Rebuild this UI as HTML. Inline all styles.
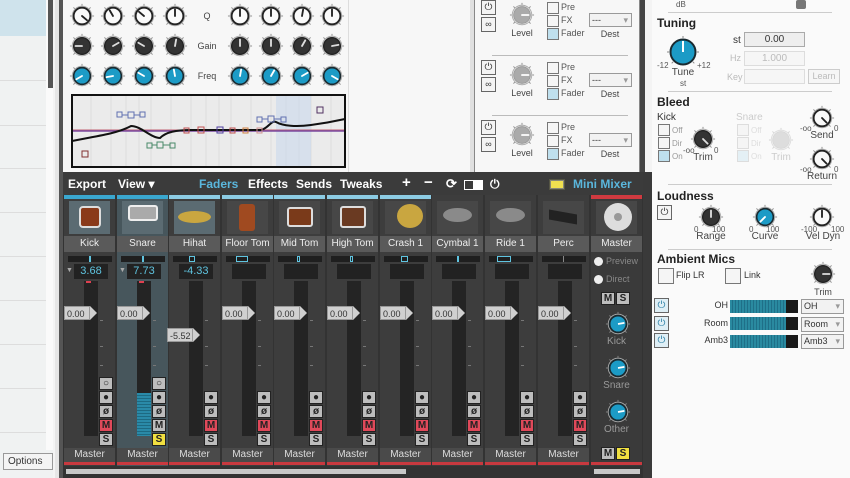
<!DOCTYPE html>
<html><head><meta charset="utf-8"><style>
*{margin:0;padding:0;box-sizing:border-box}
body{width:850px;height:478px;overflow:hidden;position:relative;background:#f4f4f4;font-family:"Liberation Sans",sans-serif;font-size:10px;color:#333}
.a{position:absolute}
.k{position:absolute;width:26px;height:26px}
.k .p{stroke-width:2;stroke-linecap:round}
.lbl{position:absolute;text-align:center;font-size:9px;color:#444}
.strip{position:absolute;top:195px;width:51px;height:271px;background:#3d3d3d}
.strip>*{position:absolute}
.bar{left:0;top:0;width:51px;height:4px}
.img{left:5px;top:6px;width:41px;height:33px;background:#474747}
.nm{left:0;top:41px;width:51px;height:16px;background:#5a5a5a;color:#eee;text-align:center;line-height:16px;font-size:10px}
.pan{left:4px;top:61px;width:44px;height:6px;background:#1f1f1f}
.pan i{position:absolute;top:0;height:6px;border:1px solid #5fc4e0}
.val{left:10px;top:69px;width:34px;height:15px;background:#222;color:#5fc4e0;text-align:center;font-size:11px;line-height:15px}
.trk{left:20px;top:86px;width:14px;height:155px;background:#242424}
.tk{left:36px;width:3px;height:1px;background:#777}
.hd{left:0;top:111px;width:26px;height:14px;background:#d0d0d0;color:#333;font-size:9px;line-height:14px;padding-left:2px;border:1px solid #999}
.hd:after{content:"";position:absolute;right:-8px;top:-1px;border-left:7px solid #d0d0d0;border-top:7px solid transparent;border-bottom:7px solid transparent}
.b{left:35px;width:14px;height:13px;background:#bdbdbd;border:1px solid #222;color:#222;font-size:10px;font-weight:bold;text-align:center;line-height:11px}
.m{background:#e0495a;color:#222}
.ms{left:0;top:253px;width:51px;height:14px;background:#4a4a4a;color:#ddd;text-align:center;font-size:10px;line-height:14px}
.rb{left:0;top:267px;width:51px;height:3px;background:#c8393f}
.tb{position:absolute;top:177px;color:#fff;font-weight:bold;font-size:12px}
.sec{position:absolute;left:657px;font-weight:bold;font-size:12px;color:#222}
.sep{position:absolute;left:668px;width:164px;height:1px;background:#ccc}
.cb{position:absolute;width:12px;height:12px;border:1px solid #777;background:#f5f5f5}
.cbc{background:#bfe0ee}
.pw{position:absolute;width:15px;height:15px;border:1px solid #666;background:#f4f4f4;font-size:10px;text-align:center;line-height:13px}
.inp{position:absolute;border:1px solid #aaa;background:#eee;text-align:center;font-size:10px;line-height:13px}
.dd{position:absolute;width:43px;height:14px;border:1px solid #999;background:#f2f2f2;font-size:9px;padding-left:2px;line-height:12px}
.dd:after{content:"▾";position:absolute;right:3px;color:#999}
.sm{position:absolute;font-size:8px;color:#555}
</style></head><body>
<svg width="0" height="0" style="position:absolute">
<defs>
<g id="tk"><g stroke="#888" stroke-width="1"><path d="M0-13V-11" transform="rotate(-135)"/><path d="M0-13V-11" transform="rotate(-90)"/><path d="M0-13V-11" transform="rotate(-45)"/><path d="M0-13V-11"/><path d="M0-13V-11" transform="rotate(45)"/><path d="M0-13V-11" transform="rotate(90)"/><path d="M0-13V-11" transform="rotate(135)"/></g><circle r="10.5" fill="none" stroke="#aaa" stroke-width="1"/></g>
<g id="kw"><use href="#tk"/><circle r="9" fill="#fafafa" stroke="#222" stroke-width="2"/></g>
<g id="kd"><use href="#tk"/><circle r="9" fill="#333" stroke="#222" stroke-width="1.5"/></g>
<g id="kb"><use href="#tk"/><circle r="9" fill="#1c9bc6" stroke="#1a2a30" stroke-width="1.8"/></g>
<g id="kg"><use href="#tk"/><circle r="9" fill="#aaa" stroke="#999" stroke-width="1"/></g>
</defs></svg>

<!-- left panel -->
<div class="a" style="left:0;top:0;width:53px;height:478px;background:#f0f2f2"></div>
<div class="a" style="left:0;top:0;width:46px;height:36px;background:#cfe3ec"></div>
<div class="a" style="left:0;top:80px;width:46px;height:1px;background:#ddd"></div>
<div class="a" style="left:0;top:125px;width:46px;height:1px;background:#ddd"></div>
<div class="a" style="left:0;top:168px;width:46px;height:1px;background:#ddd"></div>
<div class="a" style="left:0;top:212px;width:46px;height:1px;background:#ddd"></div>
<div class="a" style="left:0;top:256px;width:46px;height:1px;background:#ddd"></div>
<div class="a" style="left:0;top:300px;width:46px;height:1px;background:#ddd"></div>
<div class="a" style="left:0;top:344px;width:46px;height:1px;background:#ddd"></div>
<div class="a" style="left:0;top:388px;width:46px;height:1px;background:#ddd"></div>
<div class="a" style="left:0;top:432px;width:46px;height:1px;background:#ddd"></div>
<div class="a" style="left:46px;top:0;width:7px;height:450px;background:#fafafa"></div>
<div class="a" style="left:48px;top:0;width:5px;height:88px;background:#555"></div>
<div class="a" style="left:3px;top:453px;width:50px;height:17px;border:1px solid #999;background:#f4f4f4;font-size:10px;line-height:15px;padding-left:4px">Options</div>
<div class="a" style="left:55px;top:0;width:8px;height:478px;background:#e6e6e6"></div>
<div class="a" style="left:59px;top:0;width:4px;height:478px;background:#555"></div>

<!-- EQ panel -->
<div class="a" style="left:63px;top:0;width:407px;height:172px;background:#f7f7f7"></div>
<div class="a" style="left:348px;top:0;width:1px;height:172px;background:#ddd"></div>
<svg class="k" style="left:69px;top:3px"viewBox="-14 -14 28 28"><use href="#kw"/><path class="p" d="M0 0V-7" stroke="#222" transform="rotate(130)"/></svg>
<svg class="k" style="left:100px;top:3px"viewBox="-14 -14 28 28"><use href="#kw"/><path class="p" d="M0 0V-7" stroke="#222" transform="rotate(-30)"/></svg>
<svg class="k" style="left:131px;top:3px"viewBox="-14 -14 28 28"><use href="#kw"/><path class="p" d="M0 0V-7" stroke="#222" transform="rotate(-50)"/></svg>
<svg class="k" style="left:162px;top:3px"viewBox="-14 -14 28 28"><use href="#kw"/><path class="p" d="M0 0V-7" stroke="#222"/></svg>
<svg class="k" style="left:227px;top:3px"viewBox="-14 -14 28 28"><use href="#kw"/><path class="p" d="M0 0V-7" stroke="#222"/></svg>
<svg class="k" style="left:258px;top:3px"viewBox="-14 -14 28 28"><use href="#kw"/><path class="p" d="M0 0V-7" stroke="#222"/></svg>
<svg class="k" style="left:289px;top:3px"viewBox="-14 -14 28 28"><use href="#kw"/><path class="p" d="M0 0V-7" stroke="#222" transform="rotate(10)"/></svg>
<svg class="k" style="left:319px;top:3px"viewBox="-14 -14 28 28"><use href="#kw"/><path class="p" d="M0 0V-7" stroke="#222"/></svg>
<svg class="k" style="left:69px;top:33px"viewBox="-14 -14 28 28"><use href="#kd"/><path class="p" d="M0 0V-7" stroke="#ddd" transform="rotate(-90)"/></svg>
<svg class="k" style="left:100px;top:33px"viewBox="-14 -14 28 28"><use href="#kd"/><path class="p" d="M0 0V-7" stroke="#ddd" transform="rotate(60)"/></svg>
<svg class="k" style="left:131px;top:33px"viewBox="-14 -14 28 28"><use href="#kd"/><path class="p" d="M0 0V-7" stroke="#ddd" transform="rotate(-60)"/></svg>
<svg class="k" style="left:162px;top:33px"viewBox="-14 -14 28 28"><use href="#kd"/><path class="p" d="M0 0V-7" stroke="#ddd" transform="rotate(10)"/></svg>
<svg class="k" style="left:227px;top:33px"viewBox="-14 -14 28 28"><use href="#kd"/><path class="p" d="M0 0V-7" stroke="#ddd"/></svg>
<svg class="k" style="left:258px;top:33px"viewBox="-14 -14 28 28"><use href="#kd"/><path class="p" d="M0 0V-7" stroke="#ddd"/></svg>
<svg class="k" style="left:289px;top:33px"viewBox="-14 -14 28 28"><use href="#kd"/><path class="p" d="M0 0V-7" stroke="#ddd" transform="rotate(30)"/></svg>
<svg class="k" style="left:319px;top:33px"viewBox="-14 -14 28 28"><use href="#kd"/><path class="p" d="M0 0V-7" stroke="#ddd" transform="rotate(80)"/></svg>
<svg class="k" style="left:69px;top:63px"viewBox="-14 -14 28 28"><use href="#kb"/><path class="p" d="M0 0V-7" stroke="#fff" transform="rotate(-120)"/></svg>
<svg class="k" style="left:100px;top:63px"viewBox="-14 -14 28 28"><use href="#kb"/><path class="p" d="M0 0V-7" stroke="#fff" transform="rotate(-100)"/></svg>
<svg class="k" style="left:131px;top:63px"viewBox="-14 -14 28 28"><use href="#kb"/><path class="p" d="M0 0V-7" stroke="#fff" transform="rotate(-60)"/></svg>
<svg class="k" style="left:162px;top:63px"viewBox="-14 -14 28 28"><use href="#kb"/><path class="p" d="M0 0V-7" stroke="#fff" transform="rotate(-10)"/></svg>
<svg class="k" style="left:227px;top:63px"viewBox="-14 -14 28 28"><use href="#kb"/><path class="p" d="M0 0V-7" stroke="#fff" transform="rotate(10)"/></svg>
<svg class="k" style="left:258px;top:63px"viewBox="-14 -14 28 28"><use href="#kb"/><path class="p" d="M0 0V-7" stroke="#fff" transform="rotate(30)"/></svg>
<svg class="k" style="left:289px;top:63px"viewBox="-14 -14 28 28"><use href="#kb"/><path class="p" d="M0 0V-7" stroke="#fff" transform="rotate(60)"/></svg>
<svg class="k" style="left:319px;top:63px"viewBox="-14 -14 28 28"><use href="#kb"/><path class="p" d="M0 0V-7" stroke="#fff" transform="rotate(120)"/></svg>
<div class="lbl" style="left:192px;top:11px;width:30px">Q</div>
<div class="lbl" style="left:192px;top:41px;width:30px">Gain</div>
<div class="lbl" style="left:192px;top:71px;width:30px">Freq</div>
<svg class="a" style="left:71px;top:94px" width="275" height="74" viewBox="0 0 275 74">
<rect x="1" y="1" width="273" height="72" fill="#ebebeb"/>
<g stroke="#dcdcdc"><path d="M20 0V74M40 0V74M55 0V74M68 0V74M80 0V74M100 0V74M120 0V74M135 0V74M148 0V74M160 0V74M180 0V74M200 0V74M215 0V74M228 0V74M240 0V74M260 0V74"/></g>
<rect x="205" y="2" width="35" height="70" fill="#c9d8ec" opacity=".6"/>
<path d="M1 36H274" stroke="#c06070" stroke-width="1"/>
<path d="M1 37H274" stroke="#7a4aa0" stroke-width="1.5"/>
<path d="M1 47C25 42 45 40 60 32C70 32 80 44 89 44C95 38 105 36 120 36L190 36C198 34 200 26 205 28C212 32 225 33 240 31C255 29 265 27 274 25" fill="none" stroke="#111" stroke-width="2"/>
<g fill="none" stroke-width="1"><g stroke="#6070b0"><rect x="46" y="18" width="5" height="5"/><rect x="57" y="18" width="6" height="6"/><rect x="69" y="18" width="5" height="5"/><path d="M51 21H57M63 21H69"/><rect x="186" y="23" width="5" height="5"/><rect x="197" y="22" width="6" height="6"/><rect x="210" y="23" width="5" height="5"/><path d="M191 25H197M203 25H210"/></g>
<g stroke="#4a8a6a"><rect x="76" y="49" width="5" height="5"/><rect x="86" y="48" width="6" height="6"/><rect x="99" y="49" width="5" height="5"/><path d="M81 51H86M92 51H99"/></g>
<rect x="246" y="13" width="6" height="6" stroke="#503060"/><rect x="11" y="57" width="6" height="6" stroke="#803030"/>
<g stroke="#c05050"><rect x="113" y="34" width="5" height="5"/><rect x="127" y="33" width="6" height="6"/><rect x="159" y="34" width="5" height="5"/></g><rect x="146" y="33" width="6" height="6" stroke="#5040a0"/><rect x="172" y="34" width="5" height="5" stroke="#d08040"/><rect x="186" y="34" width="5" height="5" stroke="#d09090"/></g>
<rect x="1" y="1" width="273" height="72" fill="none" stroke="#111" stroke-width="2"/>
</svg>

<!-- sends panel -->
<div class="a" style="left:470px;top:0;width:175px;height:172px;background:#e0e0e0"></div>
<div class="a" style="left:474px;top:0;width:166px;height:172px;background:#f7f7f7;border-left:1px solid #888;border-right:1px solid #888"></div>
<div class="a" style="left:640px;top:0;width:5px;height:172px;background:#444"></div>
<div class="a" style="left:492px;top:55px;width:136px;height:1px;background:#bbb"></div>
<div class="a" style="left:492px;top:115px;width:136px;height:1px;background:#bbb"></div>

<div class="pw" style="left:481px;top:0px">⏻</div><div class="pw" style="left:481px;top:17px;font-size:9px">∞</div>
<svg class="k" style="left:509px;top:2px"viewBox="-14 -14 28 28"><use href="#kg"/><path class="p" d="M0 0V-7" stroke="#fff" transform="rotate(90)"/></svg>
<div class="lbl" style="left:507px;top:28px;width:30px">Level</div>
<div class="cb" style="left:547px;top:2px"></div><div class="sm" style="left:561px;top:2px;font-size:9px">Pre</div>
<div class="cb" style="left:547px;top:15px"></div><div class="sm" style="left:561px;top:15px;font-size:9px">FX</div>
<div class="cb cbc" style="left:547px;top:28px"></div><div class="sm" style="left:561px;top:28px;font-size:9px">Fader</div>
<div class="dd" style="left:589px;top:13px">---</div><div class="lbl" style="left:595px;top:29px;width:30px">Dest</div>

<div class="pw" style="left:481px;top:60px">⏻</div><div class="pw" style="left:481px;top:77px;font-size:9px">∞</div>
<svg class="k" style="left:509px;top:62px"viewBox="-14 -14 28 28"><use href="#kg"/><path class="p" d="M0 0V-7" stroke="#fff" transform="rotate(90)"/></svg>
<div class="lbl" style="left:507px;top:88px;width:30px">Level</div>
<div class="cb" style="left:547px;top:62px"></div><div class="sm" style="left:561px;top:62px;font-size:9px">Pre</div>
<div class="cb" style="left:547px;top:75px"></div><div class="sm" style="left:561px;top:75px;font-size:9px">FX</div>
<div class="cb cbc" style="left:547px;top:88px"></div><div class="sm" style="left:561px;top:88px;font-size:9px">Fader</div>
<div class="dd" style="left:589px;top:73px">---</div><div class="lbl" style="left:595px;top:89px;width:30px">Dest</div>

<div class="pw" style="left:481px;top:120px">⏻</div><div class="pw" style="left:481px;top:137px;font-size:9px">∞</div>
<svg class="k" style="left:509px;top:122px"viewBox="-14 -14 28 28"><use href="#kg"/><path class="p" d="M0 0V-7" stroke="#fff" transform="rotate(90)"/></svg>
<div class="lbl" style="left:507px;top:148px;width:30px">Level</div>
<div class="cb" style="left:547px;top:122px"></div><div class="sm" style="left:561px;top:122px;font-size:9px">Pre</div>
<div class="cb" style="left:547px;top:135px"></div><div class="sm" style="left:561px;top:135px;font-size:9px">FX</div>
<div class="cb cbc" style="left:547px;top:148px"></div><div class="sm" style="left:561px;top:148px;font-size:9px">Fader</div>
<div class="dd" style="left:589px;top:133px">---</div><div class="lbl" style="left:595px;top:149px;width:30px">Dest</div>

<!-- mixer -->
<div class="a" style="left:63px;top:172px;width:582px;height:306px;background:#333"></div>
<div class="a" style="left:63px;top:172px;width:582px;height:23px;background:#3b3b3b"></div>
<div class="tb" style="left:68px">Export</div>
<div class="tb" style="left:118px">View ▾</div>
<div class="tb" style="left:199px;color:#5ab6dc">Faders</div>
<div class="tb" style="left:248px">Effects</div>
<div class="tb" style="left:296px">Sends</div>
<div class="tb" style="left:340px">Tweaks</div>
<div class="tb" style="left:402px;font-size:15px;top:174px">+</div>
<div class="tb" style="left:424px;font-size:15px;top:174px">−</div>
<div class="tb" style="left:446px;font-size:13px;top:176px">⟳</div>
<div class="a" style="left:464px;top:180px;width:19px;height:10px;border:1px solid #fff"><div class="a" style="left:8px;top:0;width:10px;height:8px;background:#fff"></div></div>
<div class="tb" style="left:490px">⏻</div>
<div class="a" style="left:550px;top:180px;width:14px;height:9px;background:#f0e050;border:1px solid #887;box-shadow:0 0 0 1px #554"></div>
<div class="tb" style="left:573px;color:#5ab6dc">Mini Mixer</div>

<!-- strips -->
<div class="strip" style="left:64px"><div class="bar" style="background:#3aa7cf"></div><div class="img" style="background:#5b6b72"><div class="a" style="left:10px;top:5px;width:22px;height:22px;border-radius:4px;background:#8a3a1a;border:2px solid #ddd"></div></div><div class="nm">Kick</div><div class="pan"><i style="left:21px;width:1px"></i></div><div class="a" style="left:2px;top:72px;color:#aaa;font-size:7px">▼</div><div class="val">3.68</div><div class="trk"></div><div class="a" style="left:22px;top:86px;width:5px;height:2px;background:#e04050"></div><div class="tk" style="top:125px"></div><div class="tk" style="top:151px"></div><div class="tk" style="top:170px"></div><div class="hd">0.00</div><div class="b" style="top:182px">○</div><div class="b" style="top:196px">●</div><div class="b" style="top:210px">ø</div><div class="b m" style="top:224px">M</div><div class="b" style="top:238px">S</div><div class="ms">Master</div><div class="rb"></div></div>

<div class="strip" style="left:117px;background:#47565c"><div class="bar" style="background:#3aa7cf"></div><div class="img" style="background:#5b6b72"><div class="a" style="left:6px;top:4px;width:30px;height:16px;border-radius:3px;background:#aaa;border:2px solid #eee"></div></div><div class="nm">Snare</div><div class="pan"><i style="left:21px;width:1px"></i></div><div class="a" style="left:2px;top:72px;color:#aaa;font-size:7px">▼</div><div class="val">7.73</div><div class="trk"></div><div class="a" style="left:20px;top:198px;width:14px;height:43px;background:repeating-linear-gradient(#2a8aa8 0 2px,#1d6a82 2px 3px)"></div><div class="a" style="left:22px;top:86px;width:5px;height:2px;background:#e04050"></div><div class="tk" style="top:125px"></div><div class="tk" style="top:151px"></div><div class="tk" style="top:170px"></div><div class="hd">0.00</div><div class="b" style="top:182px">○</div><div class="b" style="top:196px">●</div><div class="b" style="top:210px">ø</div><div class="b" style="top:224px">M</div><div class="b" style="top:238px;background:#f0e040">S</div><div class="ms">Master</div><div class="rb"></div></div>

<div class="strip" style="left:169px"><div class="bar" style="background:#8ccbe3"></div><div class="img" style="background:#5b6b72"><div class="a" style="left:4px;top:10px;width:33px;height:12px;border-radius:50%;background:#c9a640"></div></div><div class="nm">Hihat</div><div class="pan"><i style="left:16px;width:6px"></i></div><div class="val">-4.33</div><div class="trk"></div><div class="tk" style="top:125px"></div><div class="tk" style="top:151px"></div><div class="tk" style="top:170px"></div><div class="hd" style="left:-2px;top:133px">-5.52</div><div class="b" style="top:196px">●</div><div class="b" style="top:210px">ø</div><div class="b m" style="top:224px">M</div><div class="b" style="top:238px">S</div><div class="ms">Master</div><div class="rb"></div></div>

<div class="strip" style="left:222px"><div class="bar" style="background:#8ccbe3"></div><div class="img"><div class="a" style="left:12px;top:3px;width:16px;height:27px;border-radius:3px;background:#a04a20"></div></div><div class="nm">Floor Tom</div><div class="pan"><i style="left:10px;width:12px"></i></div><div class="val"></div><div class="trk"></div><div class="tk" style="top:125px"></div><div class="tk" style="top:151px"></div><div class="tk" style="top:170px"></div><div class="hd">0.00</div><div class="b" style="top:196px">●</div><div class="b" style="top:210px">ø</div><div class="b m" style="top:224px">M</div><div class="b" style="top:238px">S</div><div class="ms">Master</div><div class="rb"></div></div>

<div class="strip" style="left:274px"><div class="bar" style="background:#8ccbe3"></div><div class="img"><div class="a" style="left:8px;top:6px;width:26px;height:20px;border-radius:3px;background:#7a3a1a;border:2px solid #ddd"></div></div><div class="nm">Mid Tom</div><div class="pan"><i style="left:19px;width:3px"></i></div><div class="val"></div><div class="trk"></div><div class="tk" style="top:125px"></div><div class="tk" style="top:151px"></div><div class="tk" style="top:170px"></div><div class="hd">0.00</div><div class="b" style="top:196px">●</div><div class="b" style="top:210px">ø</div><div class="b m" style="top:224px">M</div><div class="b" style="top:238px">S</div><div class="ms">Master</div><div class="rb"></div></div>

<div class="strip" style="left:327px"><div class="bar" style="background:#8ccbe3"></div><div class="img"><div class="a" style="left:8px;top:5px;width:26px;height:22px;border-radius:3px;background:#6a3a22;border:2px solid #ddd"></div></div><div class="nm">High Tom</div><div class="pan"><i style="left:19px;width:3px"></i></div><div class="val"></div><div class="trk"></div><div class="tk" style="top:125px"></div><div class="tk" style="top:151px"></div><div class="tk" style="top:170px"></div><div class="hd">0.00</div><div class="b" style="top:196px">●</div><div class="b" style="top:210px">ø</div><div class="b m" style="top:224px">M</div><div class="b" style="top:238px">S</div><div class="ms">Master</div><div class="rb"></div></div>

<div class="strip" style="left:380px"><div class="bar" style="background:#8ccbe3"></div><div class="img"><div class="a" style="left:12px;top:3px;width:26px;height:24px;border-radius:50%;background:#c9a640"></div></div><div class="nm">Crash 1</div><div class="pan"><i style="left:17px;width:7px"></i></div><div class="val"></div><div class="trk"></div><div class="tk" style="top:125px"></div><div class="tk" style="top:151px"></div><div class="tk" style="top:170px"></div><div class="hd">0.00</div><div class="b" style="top:196px">●</div><div class="b" style="top:210px">ø</div><div class="b m" style="top:224px">M</div><div class="b" style="top:238px">S</div><div class="ms">Master</div><div class="rb"></div></div>

<div class="strip" style="left:432px"><div class="img"><div class="a" style="left:6px;top:7px;width:29px;height:14px;border-radius:50%;background:#8a8a8a"></div></div><div class="nm">Cymbal 1</div><div class="pan"><i style="left:21px;width:2px"></i></div><div class="val"></div><div class="trk"></div><div class="tk" style="top:125px"></div><div class="tk" style="top:151px"></div><div class="tk" style="top:170px"></div><div class="hd">0.00</div><div class="b" style="top:196px">●</div><div class="b" style="top:210px">ø</div><div class="b m" style="top:224px">M</div><div class="b" style="top:238px">S</div><div class="ms">Master</div><div class="rb"></div></div>

<div class="strip" style="left:485px"><div class="img"><div class="a" style="left:6px;top:7px;width:29px;height:14px;border-radius:50%;background:#8a8a8a"></div></div><div class="nm">Ride 1</div><div class="pan"><i style="left:8px;width:14px"></i></div><div class="val"></div><div class="trk"></div><div class="tk" style="top:125px"></div><div class="tk" style="top:151px"></div><div class="tk" style="top:170px"></div><div class="hd">0.00</div><div class="b" style="top:196px">●</div><div class="b" style="top:210px">ø</div><div class="b m" style="top:224px">M</div><div class="b" style="top:238px">S</div><div class="ms">Master</div><div class="rb"></div></div>

<div class="strip" style="left:538px"><div class="img"><div class="a" style="left:6px;top:11px;width:28px;height:10px;background:#222;transform:skewY(10deg)"></div></div><div class="nm">Perc</div><div class="pan" style="background:#1f1f1f"><div class="a" style="left:21px;top:0;width:1px;height:6px;background:#888"></div></div><div class="val"></div><div class="trk"></div><div class="tk" style="top:125px"></div><div class="tk" style="top:151px"></div><div class="tk" style="top:170px"></div><div class="hd">0.00</div><div class="b" style="top:196px">●</div><div class="b" style="top:210px">ø</div><div class="b m" style="top:224px">M</div><div class="b" style="top:238px">S</div><div class="ms">Master</div><div class="rb"></div></div>

<!-- master strip -->
<div class="strip" style="left:591px;background:#3a3a3a"><div class="bar" style="background:#d03a40"></div><div class="img"><div class="a" style="left:8px;top:2px;width:28px;height:28px;border-radius:50%;background:#ddd"><div class="a" style="left:10px;top:10px;width:8px;height:8px;border-radius:50%;background:#999"></div></div></div><div class="nm">Master</div>
<div class="a" style="left:3px;top:62px;width:9px;height:9px;border-radius:50%;background:#eee"></div><div class="a" style="left:15px;top:61px;color:#888;font-size:9px">Preview</div>
<div class="a" style="left:3px;top:80px;width:9px;height:9px;border-radius:50%;background:#eee"></div><div class="a" style="left:15px;top:79px;color:#888;font-size:9px">Direct</div>
<div class="b" style="left:10px;top:97px">M</div><div class="b" style="left:25px;top:97px">S</div>
<div class="a" style="left:14px;top:116px;width:26px;height:26px"><svg width="26" height="26" viewBox="-14 -14 28 28"><use href="#kb"/><path class="p" d="M0 0V-7" stroke="#fff" stroke-width="2" transform="rotate(80)"/></svg></div><div class="a" style="left:0;top:141px;width:51px;text-align:center;color:#999;font-size:10px">Kick</div>
<div class="a" style="left:14px;top:160px;width:26px;height:26px"><svg width="26" height="26" viewBox="-14 -14 28 28"><use href="#kb"/><path class="p" d="M0 0V-7" stroke="#fff" stroke-width="2" transform="rotate(80)"/></svg></div><div class="a" style="left:0;top:185px;width:51px;text-align:center;color:#999;font-size:10px">Snare</div>
<div class="a" style="left:14px;top:204px;width:26px;height:26px"><svg width="26" height="26" viewBox="-14 -14 28 28"><use href="#kb"/><path class="p" d="M0 0V-7" stroke="#fff" stroke-width="2" transform="rotate(80)"/></svg></div><div class="a" style="left:0;top:229px;width:51px;text-align:center;color:#999;font-size:10px">Other</div>
<div class="b" style="left:10px;top:252px">M</div><div class="b" style="left:25px;top:252px;background:#f0e040">S</div>
<div class="rb"></div></div>
<div class="a" style="left:66px;top:469px;width:340px;height:5px;background:#c8c8c8"></div>
<div class="a" style="left:594px;top:469px;width:46px;height:5px;background:#c8c8c8"></div>
<div class="a" style="left:643px;top:172px;width:9px;height:306px;background:#3a3a3a"></div>

<!-- right panel -->
<div class="a" style="left:652px;top:0;width:198px;height:478px;background:#fafafa"></div>
<div class="sm" style="left:676px;top:0">dB</div>
<div class="a" style="left:796px;top:0;width:10px;height:9px;background:#777;border-radius:2px"></div>
<div class="sep" style="top:12px"></div>
<div class="sec" style="top:16px">Tuning</div>
<svg class="a" style="left:666px;top:35px" width="34" height="34" viewBox="-17 -17 34 34"><g stroke="#888"><path d="M0-16V-14"/><path d="M0-16V-14" transform="rotate(-135)"/><path d="M0-16V-14" transform="rotate(135)"/><path d="M0-16V-14" transform="rotate(-90)"/><path d="M0-16V-14" transform="rotate(90)"/></g><circle r="12.5" fill="#1c9bc6" stroke="#1a2a30" stroke-width="2"/><path d="M0 0V-11" stroke="#fff" stroke-width="2"/></svg>
<div class="sm" style="left:657px;top:61px">-12</div><div class="sm" style="left:697px;top:61px">+12</div>
<div class="lbl" style="left:668px;top:67px;width:30px;font-size:10px">Tune</div><div class="sm" style="left:680px;top:79px">st</div>
<div class="a" style="left:733px;top:35px;font-size:10px">st</div><div class="inp" style="left:744px;top:32px;width:61px;height:15px">0.00</div>
<div class="a" style="left:730px;top:53px;font-size:9px;color:#bbb">Hz</div><div class="inp" style="left:744px;top:51px;width:61px;height:15px;color:#bbb;border-color:#ddd;background:#f6f6f6">1.000</div>
<div class="a" style="left:727px;top:72px;font-size:9px;color:#bbb">Key</div><div class="inp" style="left:744px;top:69px;width:61px;height:15px;border-color:#ddd;background:#f6f6f6"></div>
<div class="inp" style="left:808px;top:69px;width:32px;height:15px;color:#bbb;border-color:#ccc;background:#f6f6f6;font-size:9px">Learn</div>
<div class="sep" style="top:91px"></div>
<div class="sec" style="top:95px">Bleed</div>
<div class="a" style="left:657px;top:112px;font-size:10px">Kick</div>
<div class="cb" style="left:658px;top:124px"></div><div class="sm" style="left:672px;top:126px;color:#999">Off</div>
<div class="cb" style="left:658px;top:137px"></div><div class="sm" style="left:672px;top:139px;color:#999">Dir</div>
<div class="cb cbc" style="left:658px;top:150px"></div><div class="sm" style="left:672px;top:152px;color:#999">On</div>
<svg class="k" style="left:690px;top:126px"viewBox="-14 -14 28 28"><use href="#kd"/><path class="p" d="M0 0V-7" stroke="#ddd" transform="rotate(135)"/></svg>
<div class="sm" style="left:683px;top:146px">-oo</div><div class="sm" style="left:714px;top:146px">0</div><div class="lbl" style="left:688px;top:152px;width:30px;font-size:10px">Trim</div>
<div class="a" style="left:736px;top:112px;font-size:10px;color:#ccc">Snare</div>
<div class="cb" style="left:737px;top:124px;border-color:#ddd"></div><div class="sm" style="left:751px;top:126px;color:#ddd">Off</div>
<div class="cb" style="left:737px;top:137px;border-color:#ddd"></div><div class="sm" style="left:751px;top:139px;color:#ddd">Dir</div>
<div class="cb" style="left:737px;top:150px;border-color:#ddd;background:#e4f0f5"></div><div class="sm" style="left:751px;top:152px;color:#ddd">On</div>
<svg class="k" style="left:768px;top:127px;opacity:.35"viewBox="-14 -14 28 28"><use href="#kg"/></svg>
<div class="lbl" style="left:766px;top:152px;width:30px;font-size:10px;color:#ccc">Trim</div>
<svg class="k" style="left:809px;top:105px"viewBox="-14 -14 28 28"><use href="#kw"/><path class="p" d="M0 0V-7" stroke="#222" transform="rotate(135)"/></svg>
<div class="sm" style="left:800px;top:124px">-oo</div><div class="sm" style="left:834px;top:124px">0</div><div class="lbl" style="left:807px;top:130px;width:30px;font-size:10px">Send</div>
<svg class="k" style="left:809px;top:146px"viewBox="-14 -14 28 28"><use href="#kw"/><path class="p" d="M0 0V-7" stroke="#222" transform="rotate(135)"/></svg>
<div class="sm" style="left:800px;top:165px">-oo</div><div class="sm" style="left:834px;top:165px">0</div><div class="lbl" style="left:805px;top:171px;width:34px;font-size:10px">Return</div>
<div class="sep" style="top:184px"></div>
<div class="sec" style="top:189px">Loudness</div>
<div class="pw" style="left:657px;top:205px">⏻</div>
<svg class="k" style="left:698px;top:204px"viewBox="-14 -14 28 28"><use href="#kd"/><path class="p" d="M0 0V-7" stroke="#ddd"/></svg>
<div class="sm" style="left:694px;top:225px">0</div><div class="sm" style="left:712px;top:225px">100</div><div class="lbl" style="left:695px;top:231px;width:32px;font-size:10px">Range</div>
<svg class="k" style="left:752px;top:204px"viewBox="-14 -14 28 28"><use href="#kb"/><path class="p" d="M0 0V-7" stroke="#fff" transform="rotate(-135)"/></svg>
<div class="sm" style="left:749px;top:225px">0</div><div class="sm" style="left:766px;top:225px">100</div><div class="lbl" style="left:749px;top:231px;width:32px;font-size:10px">Curve</div>
<svg class="k" style="left:809px;top:204px"viewBox="-14 -14 28 28"><use href="#kw"/><path class="p" d="M0 0V-7" stroke="#222"/></svg>
<div class="sm" style="left:801px;top:225px">-100</div><div class="sm" style="left:831px;top:225px">100</div><div class="lbl" style="left:803px;top:231px;width:40px;font-size:10px">Vel Dyn</div>
<div class="sep" style="top:249px"></div>
<div class="sec" style="top:252px">Ambient Mics</div>
<div class="cb" style="left:658px;top:268px;width:16px;height:16px"></div><div class="a" style="left:676px;top:270px;font-size:9px">Flip LR</div>
<div class="cb" style="left:725px;top:268px;width:16px;height:16px"></div><div class="a" style="left:744px;top:270px;font-size:9px">Link</div>
<svg class="k" style="left:810px;top:261px"viewBox="-14 -14 28 28"><use href="#kd"/><path class="p" d="M0 0V-7" stroke="#ddd" transform="rotate(90)"/></svg>
<div class="lbl" style="left:808px;top:287px;width:30px;font-size:9px">Trim</div>
<div class="pw" style="left:654px;top:298px;background:#dfeff6;color:#2a7fa5">⏻</div>
<div class="pw" style="left:654px;top:316px;background:#dfeff6;color:#2a7fa5">⏻</div>
<div class="pw" style="left:654px;top:333px;background:#dfeff6;color:#2a7fa5">⏻</div>
<div class="a" style="left:690px;top:300px;width:38px;text-align:right;font-size:9px">OH</div>
<div class="a" style="left:690px;top:318px;width:38px;text-align:right;font-size:9px">Room</div>
<div class="a" style="left:690px;top:335px;width:38px;text-align:right;font-size:9px">Amb3</div>
<div class="a" style="left:730px;top:300px;width:68px;height:13px;background:#1a1a1a"><div style="width:56px;height:13px;background:repeating-linear-gradient(90deg,#2a8aa0 0 2px,#1f7088 2px 3px)"></div></div>
<div class="a" style="left:730px;top:317px;width:68px;height:13px;background:#1a1a1a"><div style="width:56px;height:13px;background:repeating-linear-gradient(90deg,#2a8aa0 0 2px,#1f7088 2px 3px)"></div></div>
<div class="a" style="left:730px;top:335px;width:68px;height:13px;background:#1a1a1a"><div style="width:56px;height:13px;background:repeating-linear-gradient(90deg,#2a8aa0 0 2px,#1f7088 2px 3px)"></div></div>
<div class="dd" style="left:801px;top:299px;height:15px">OH</div>
<div class="dd" style="left:801px;top:317px;height:15px">Room</div>
<div class="dd" style="left:801px;top:334px;height:15px">Amb3</div>
</body></html>
